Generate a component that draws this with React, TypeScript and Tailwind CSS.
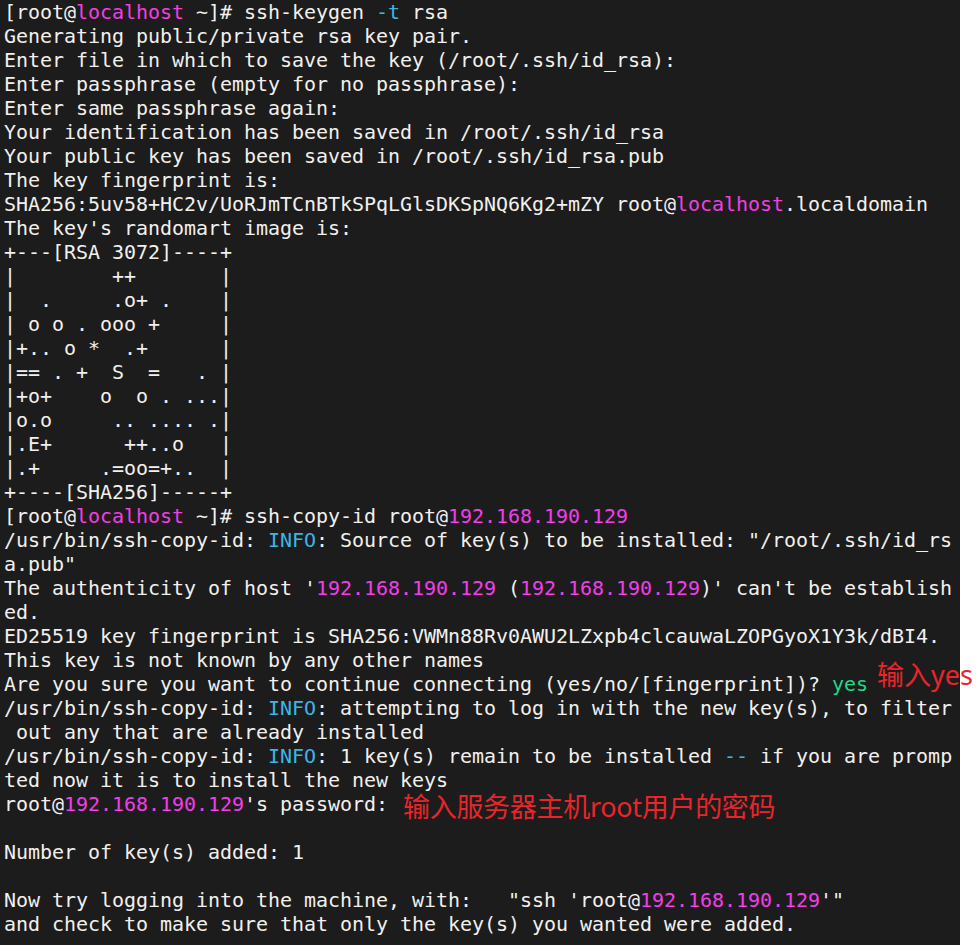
import React from 'react';

type Seg = { t: string; c?: 'm' | 'c' | 'g' };

const M = (t: string): Seg => ({ t, c: 'm' });
const C = (t: string): Seg => ({ t, c: 'c' });
const G = (t: string): Seg => ({ t, c: 'g' });
const P = (t: string): Seg => ({ t });

const IP = '192.168.190.129';

const lines: Seg[][] = [
  [P('[root@'), M('localhost'), P(' ~]# ssh-keygen '), C('-t'), P(' rsa')],
  [P('Generating public/private rsa key pair.')],
  [P('Enter file in which to save the key (/root/.ssh/id_rsa):')],
  [P('Enter passphrase (empty for no passphrase):')],
  [P('Enter same passphrase again:')],
  [P('Your identification has been saved in /root/.ssh/id_rsa')],
  [P('Your public key has been saved in /root/.ssh/id_rsa.pub')],
  [P('The key fingerprint is:')],
  [P('SHA256:5uv58+HC2v/UoRJmTCnBTkSPqLGlsDKSpNQ6Kg2+mZY root@'), M('localhost'), P('.localdomain')],
  [P("The key's randomart image is:")],
  [P('+---[RSA 3072]----+')],
  [P('|        ++       |')],
  [P('|  .     .o+ .    |')],
  [P('| o o . ooo +     |')],
  [P('|+.. o *  .+      |')],
  [P('|== . +  S  =   . |')],
  [P('|+o+    o  o . ...|')],
  [P('|o.o     .. .... .|')],
  [P('|.E+      ++..o   |')],
  [P('|.+     .=oo=+..  |')],
  [P('+----[SHA256]-----+')],
  [P('[root@'), M('localhost'), P(' ~]# ssh-copy-id root@'), M(IP)],
  [P('/usr/bin/ssh-copy-id: '), C('INFO'), P(': Source of key(s) to be installed: "/root/.ssh/id_rs')],
  [P('a.pub"')],
  [P("The authenticity of host '"), M(IP), P(' ('), M(IP), P(")' can't be establish")],
  [P('ed.')],
  [P('ED25519 key fingerprint is SHA256:VWMn88Rv0AWU2LZxpb4clcauwaLZOPGyoX1Y3k/dBI4.')],
  [P('This key is not known by any other names')],
  [P('Are you sure you want to continue connecting (yes/no/[fingerprint])? '), G('yes')],
  [P('/usr/bin/ssh-copy-id: '), C('INFO'), P(': attempting to log in with the new key(s), to filter')],
  [P(' out any that are already installed')],
  [P('/usr/bin/ssh-copy-id: '), C('INFO'), P(': 1 key(s) remain to be installed '), C('--'), P(' if you are promp')],
  [P('ted now it is to install the new keys')],
  [P('root@'), M(IP), P("'s password: ")],
  [P('')],
  [P('Number of key(s) added: 1')],
  [P('')],
  [P('Now try logging into the machine, with:   "ssh \'root@'), M(IP), P('\'"')],
  [P('and check to make sure that only the key(s) you wanted were added.')],
];

const colorClass = (c?: Seg['c']) => {
  if (c === 'm') return 'text-[#f23ee6]';
  if (c === 'c') return 'text-[#3bb6e4]';
  if (c === 'g') return 'text-[#22d68a]';
  return '';
};

export default function App() {
  return (
    <div className="relative w-[977px] h-[945px] bg-white overflow-hidden">
      {/* terminal */}
      <div className="w-[960px] h-full bg-[#1c1c1c] pl-[4px] text-[20px] text-[#f0f0f0] font-['DejaVu_Sans_Mono','Liberation_Mono',monospace] tracking-[-0.04px]">
        {lines.map((segs, i) => (
          <div key={i} className="h-6 leading-6 whitespace-pre">
            {segs.map((s, j) => (
              <span key={j} className={colorClass(s.c)}>
                {s.t}
              </span>
            ))}
          </div>
        ))}
      </div>

      {/* annotations */}
      <div className="absolute left-[877px] top-[659px] text-[27px] leading-8 text-[#e8252a] font-['Noto_Sans','Noto_Sans_CJK_SC',sans-serif] whitespace-nowrap">
        输入yes
      </div>
      <div className="absolute left-[403px] top-[791px] text-[27px] leading-8 tracking-[-0.3px] text-[#e8252a] font-['Noto_Sans','Noto_Sans_CJK_SC',sans-serif] whitespace-nowrap">
        输入服务器主机root用户的密码
      </div>
    </div>
  );
}
